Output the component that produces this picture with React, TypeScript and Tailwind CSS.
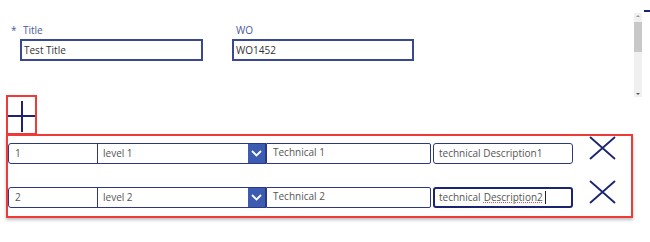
import React from "react";

const font = { fontFamily: '"Open Sans", "Noto Sans", sans-serif' };

function Chevron() {
  return (
    <svg width="11" height="7" viewBox="0 0 11 7" fill="none">
      <path d="M1 1 L5.5 5.5 L10 1" stroke="white" strokeWidth="1.8" />
    </svg>
  );
}

function XIcon() {
  return (
    <svg width="27" height="24" viewBox="0 0 27 24" fill="none">
      <path d="M1 1 L26 23 M26 1 L1 23" stroke="#1b2470" strokeWidth="1.8" />
    </svg>
  );
}

function Row({ n, level, tech, desc, focused }: { n: string; level: string; tech: string; desc: string; focused?: boolean }) {
  return (
    <div className="flex h-[44px] items-start">
      <div className="mt-[7px] flex h-[21px] w-[90px] items-center rounded-l-[3px] border border-[#2c3786] pl-[6px] text-[10px] text-[#555]">
        {n}
      </div>
      <div className="mt-[7px] -ml-px flex h-[21px] w-[169px] items-stretch border border-[#2c3786]">
        <div className="flex flex-1 items-center pl-[5px] text-[10px] text-[#555]">{level}</div>
        <div className="flex w-[17px] items-center justify-center bg-[#3b5cb0]">
          <Chevron />
        </div>
      </div>
      <div className="mt-[7px] flex h-[21px] w-[165px] items-start rounded-r-[2px] border border-[#2c3786] pl-[6px] pt-[1px] text-[10px] text-[#555]">
        {tech}
      </div>
      {focused ? (
        <div className="mt-[7px] ml-[2px] flex h-[21px] w-[140px] items-center rounded-[3px] border-2 border-[#1b2470] pl-[4px] text-[10px] text-[#555]">
          <span>technical</span>
          <span className="ml-[3px] underline decoration-dotted decoration-[#e05050]">{desc}</span>
          <span className="ml-[2px] inline-block h-[13px] w-px bg-[#222]" />
        </div>
      ) : (
        <div className="mt-[7px] ml-[2px] flex h-[21px] w-[140px] items-center rounded-[3px] border border-[#2c3786] pl-[5px] text-[10px] text-[#555]">
          technical {desc}
        </div>
      )}
      <div className="ml-[16px]">
        <XIcon />
      </div>
    </div>
  );
}

export default function App() {
  return (
    <div className="relative h-[242px] w-[650px] overflow-hidden bg-white" style={font}>
      <div className="flex pt-[22px]">
        <div className="flex w-[203px] flex-col">
          <div className="flex h-[16px] items-center text-[10px] text-[#4a58a0]">
            <span className="ml-[11px] w-[12px]">*</span>
            <span>Title</span>
          </div>
          <div className="ml-[20px] mt-[1px] flex h-[22px] w-[183px] items-center border-2 border-[#3a4791] pl-[2px] text-[10px] text-[#333]">
            Test Title
          </div>
        </div>
        <div className="ml-[29px] flex flex-col">
          <div className="flex h-[16px] items-center pl-[4px] text-[10px] text-[#4a58a0]">WO</div>
          <div className="mt-[1px] flex h-[22px] w-[182px] items-center border-2 border-[#3a4791] pl-[2px] text-[10px] text-[#333]">
            WO1452
          </div>
        </div>
      </div>

      <div className="ml-[6px] mt-[34px] flex h-[40px] w-[31px] items-center justify-center border-2 border-[#f03a3a]">
        <svg width="27" height="33" viewBox="0 0 27 33" fill="none">
          <path d="M0 17 H27 M14 2 V33" stroke="#1b2470" strokeWidth="2" />
        </svg>
      </div>

      <div className="-mt-px ml-[6px] h-[84px] w-[627px] border-2 border-[#f03a3a] shadow-[0_2px_3px_rgba(0,0,0,0.25)]">
        <Row n="1" level="level 1" tech="Technical 1" desc="Description1" />
        <Row n="2" level="level 2" tech="Technical 2" desc="Description2" focused />
      </div>

      <div className="absolute left-[634px] top-[13px] flex h-[84px] w-[8px] flex-col items-center bg-[#f0f0f0]">
        <div className="mt-[2px] h-0 w-0 border-x-[2px] border-b-[2px] border-x-transparent border-b-[#999]" />
        <div className="mt-[5px] h-[30px] w-[8px] bg-[#c8c8c8]" />
        <div className="flex-1" />
        <div className="mb-[2px] h-0 w-0 border-x-[2px] border-t-[2px] border-x-transparent border-t-[#555]" />
      </div>
      <div className="absolute left-[644px] top-[10px] h-[2px] w-[6px] bg-[#1b2470]" />
    </div>
  );
}
